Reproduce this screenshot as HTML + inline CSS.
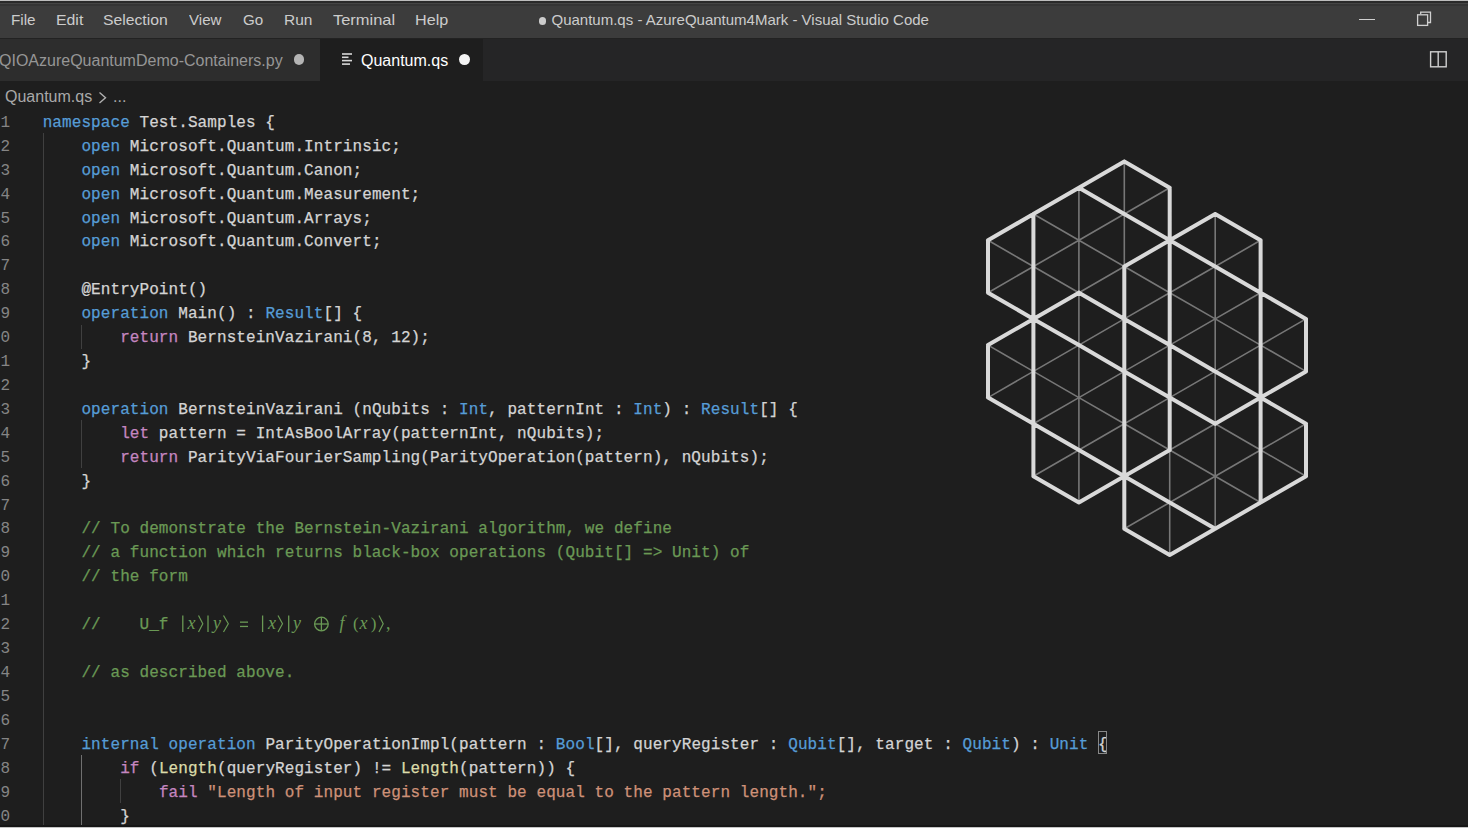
<!DOCTYPE html>
<html><head><meta charset="utf-8">
<style>
*{margin:0;padding:0;box-sizing:border-box}
html,body{width:1468px;height:828px;overflow:hidden;background:#1e1e1e}
body{position:relative;font-family:"Liberation Sans",sans-serif}
.abs{position:absolute;white-space:pre}
#title{position:absolute;left:0;top:0;width:1468px;height:38px;background:#3c3c3c}
.menu{position:absolute;top:10.8px;font-size:15px;color:#cccccc;line-height:17px;white-space:pre;transform-origin:0 0}
#tabs{position:absolute;left:0;top:38px;width:1468px;height:43px;background:#252526}
#tab1{position:absolute;left:0;top:0;width:320px;height:43px;background:#2d2d2d}
#tab2{position:absolute;left:320px;top:0;width:163px;height:43px;background:#1e1e1e}
.cl{position:absolute;left:42.7px;font-family:"Liberation Mono",monospace;font-size:16px;letter-spacing:0.08px;line-height:24px;color:#d4d4d4;white-space:pre;-webkit-text-stroke:0.25px currentColor}
.ln{position:absolute;left:-20px;width:30px;font-family:"Liberation Mono",monospace;font-size:16px;line-height:24px;color:#858585;text-align:right}
.k{color:#569cd6} .c{color:#c586c0} .cm{color:#6a9955} .s{color:#ce9178} .f{color:#dcdcaa}
.g{position:absolute;width:1px}
.t16{position:absolute;white-space:pre;font-size:16px;line-height:18px}
</style></head><body>
<div id="title">
 <div style="position:absolute;left:0;top:0;width:1468px;height:1px;background:#bdbdbd"></div>
 <div style="position:absolute;left:0;top:1px;width:1468px;height:2px;background:#2a2a2a"></div>
 <div style="position:absolute;left:0;top:3px;width:1468px;height:1px;background:#454545"></div>
 <div style="position:absolute;left:0;top:4px;width:1468px;height:2px;background:#353535"></div>
 <div class="menu" style="left:10.79px;transform:scaleX(1.0174)">File</div><div class="menu" style="left:55.76px;transform:scaleX(1.0560)">Edit</div><div class="menu" style="left:103.38px;transform:scaleX(1.0492)">Selection</div><div class="menu" style="left:189.40px;transform:scaleX(1.0061)">View</div><div class="menu" style="left:243.40px;transform:scaleX(1.0100)">Go</div><div class="menu" style="left:283.76px;transform:scaleX(1.0308)">Run</div><div class="menu" style="left:332.98px;transform:scaleX(1.0964)">Terminal</div><div class="menu" style="left:415.36px;transform:scaleX(1.0767)">Help</div>
 <div class="menu" style="left:551.5px">Quantum.qs - AzureQuantum4Mark - Visual Studio Code</div>
 <div style="position:absolute;left:538.8px;top:17.3px;width:7.4px;height:7.4px;border-radius:50%;background:#cccccc"></div>
 <div style="position:absolute;left:1358.5px;top:18.5px;width:16px;height:1.6px;background:#d0d0d0"></div>
 <svg style="position:absolute;left:0;top:0" width="1468" height="37">
  <path d="M1420.7 14.2V12.2H1430.5V22.5H1427.9" fill="none" stroke="#d0d0d0" stroke-width="1.3"/>
  <rect x="1417.6" y="14.8" width="10" height="10.6" fill="none" stroke="#d0d0d0" stroke-width="1.3"/>
 </svg>
</div>
<div id="tabs">
 <div style="position:absolute;left:0;top:0;width:1468px;height:1px;background:#222222;z-index:2"></div>
 <div id="tab1"><div class="t16" style="left:-1px;top:14.2px;color:#969696">QIOAzureQuantumDemo-Containers.py</div>
  <div style="position:absolute;left:293.5px;top:16.4px;width:10.4px;height:10.4px;border-radius:50%;background:#b4b4b4"></div></div>
 <div id="tab2"><div class="t16" style="left:41px;top:14.2px;color:#ffffff">Quantum.qs</div>
  <div style="position:absolute;left:138.9px;top:16.4px;width:10.8px;height:10.8px;border-radius:50%;background:#f4f4f4"></div>
  <svg style="position:absolute;left:0;top:-1px" width="60" height="44">
   <rect x="22" y="16.2" width="10" height="1.6" fill="#d8d8d8"/>
   <rect x="22" y="19.5" width="6.5" height="1.6" fill="#d8d8d8"/>
   <rect x="22" y="22.8" width="10" height="1.6" fill="#d8d8d8"/>
   <rect x="22" y="26.3" width="8" height="1.6" fill="#d8d8d8"/>
  </svg>
 </div>
 <svg style="position:absolute;left:1420px;top:-1px" width="48" height="44">
  <rect x="10.6" y="14.8" width="15.6" height="15" fill="none" stroke="#d0d0d0" stroke-width="1.4"/>
  <line x1="18.2" y1="14.8" x2="18.2" y2="29.8" stroke="#d0d0d0" stroke-width="1.4"/>
 </svg>
</div>
<div class="t16" style="left:5px;top:88px;color:#a9a9a9">Quantum.qs</div><svg style="position:absolute;left:98px;top:90px" width="12" height="16"><polyline points="1.5,2.5 7.5,7.8 1.5,13" fill="none" stroke="#b0b0b0" stroke-width="1.4"/></svg><div class="t16" style="left:113px;top:88px;color:#a9a9a9">...</div>
<div class="g" style="left:43px;top:133px;height:694px;background:#404040"></div><div class="g" style="left:81px;top:325px;height:24px;background:#404040"></div><div class="g" style="left:81px;top:420px;height:48px;background:#404040"></div><div class="g" style="left:81px;top:755px;height:72px;background:#707070"></div><div class="g" style="left:120px;top:779px;height:24px;background:#404040"></div>
<div class="ln" style="top:110.85px">1</div><div class="cl" style="top:110.85px"><span class="k">namespace</span> Test.Samples {</div><div class="ln" style="top:134.77px">2</div><div class="cl" style="top:134.77px">    <span class="k">open</span> Microsoft.Quantum.Intrinsic;</div><div class="ln" style="top:158.69px">3</div><div class="cl" style="top:158.69px">    <span class="k">open</span> Microsoft.Quantum.Canon;</div><div class="ln" style="top:182.61px">4</div><div class="cl" style="top:182.61px">    <span class="k">open</span> Microsoft.Quantum.Measurement;</div><div class="ln" style="top:206.53px">5</div><div class="cl" style="top:206.53px">    <span class="k">open</span> Microsoft.Quantum.Arrays;</div><div class="ln" style="top:230.45px">6</div><div class="cl" style="top:230.45px">    <span class="k">open</span> Microsoft.Quantum.Convert;</div><div class="ln" style="top:254.37px">7</div><div class="ln" style="top:278.29px">8</div><div class="cl" style="top:278.29px">    @EntryPoint()</div><div class="ln" style="top:302.21px">9</div><div class="cl" style="top:302.21px">    <span class="k">operation</span> Main() : <span class="k">Result</span>[] {</div><div class="ln" style="top:326.13px">0</div><div class="cl" style="top:326.13px">        <span class="c">return</span> BernsteinVazirani(8, 12);</div><div class="ln" style="top:350.05px">1</div><div class="cl" style="top:350.05px">    }</div><div class="ln" style="top:373.97px">2</div><div class="ln" style="top:397.89px">3</div><div class="cl" style="top:397.89px">    <span class="k">operation</span> BernsteinVazirani (nQubits : <span class="k">Int</span>, patternInt : <span class="k">Int</span>) : <span class="k">Result</span>[] {</div><div class="ln" style="top:421.81px">4</div><div class="cl" style="top:421.81px">        <span class="c">let</span> pattern = IntAsBoolArray(patternInt, nQubits);</div><div class="ln" style="top:445.73px">5</div><div class="cl" style="top:445.73px">        <span class="c">return</span> ParityViaFourierSampling(ParityOperation(pattern), nQubits);</div><div class="ln" style="top:469.65px">6</div><div class="cl" style="top:469.65px">    }</div><div class="ln" style="top:493.57px">7</div><div class="ln" style="top:517.49px">8</div><div class="cl" style="top:517.49px">    <span class="cm">// To demonstrate the Bernstein-Vazirani algorithm, we define</span></div><div class="ln" style="top:541.41px">9</div><div class="cl" style="top:541.41px">    <span class="cm">// a function which returns black-box operations (Qubit[] =&gt; Unit) of</span></div><div class="ln" style="top:565.33px">0</div><div class="cl" style="top:565.33px">    <span class="cm">// the form</span></div><div class="ln" style="top:589.25px">1</div><div class="ln" style="top:613.17px">2</div><div class="cl" style="top:613.17px">    <span class="cm">//    U_f</span></div><div class="ln" style="top:637.09px">3</div><div class="ln" style="top:661.01px">4</div><div class="cl" style="top:661.01px">    <span class="cm">// as described above.</span></div><div class="ln" style="top:684.93px">5</div><div class="ln" style="top:708.85px">6</div><div class="ln" style="top:732.77px">7</div><div class="cl" style="top:732.77px">    <span class="k">internal</span> <span class="k">operation</span> ParityOperationImpl(pattern : <span class="k">Bool</span>[], queryRegister : <span class="k">Qubit</span>[], target : <span class="k">Qubit</span>) : <span class="k">Unit</span> {</div><div class="ln" style="top:756.69px">8</div><div class="cl" style="top:756.69px">        <span class="c">if</span> (<span class="f">Length</span>(queryRegister) != <span class="f">Length</span>(pattern)) {</div><div class="ln" style="top:780.61px">9</div><div class="cl" style="top:780.61px">            <span class="c">fail</span> <span class="s">&quot;Length of input register must be equal to the pattern length.&quot;;</span></div><div class="ln" style="top:804.53px">0</div><div class="cl" style="top:804.53px">        }</div>
<div style="position:absolute;left:1097.8px;top:731px;width:9.4px;height:23.4px;border:1px solid #888888"></div>
<svg width="1468" height="828" style="position:absolute;left:0;top:0">
<line x1="182.8" y1="615.5" x2="182.8" y2="632" stroke="#6a9955" stroke-width="1.3"/><text x="187.6" y="628.5" font-family="Liberation Serif" font-style="italic" font-size="18" fill="#6a9955">x</text><polyline points="198.5,615.5 202.8,623.75 198.5,632" fill="none" stroke="#6a9955" stroke-width="1.2"/><line x1="208" y1="615.5" x2="208" y2="632" stroke="#6a9955" stroke-width="1.3"/><text x="213" y="628.5" font-family="Liberation Serif" font-style="italic" font-size="18" fill="#6a9955">y</text><polyline points="223.5,615.5 228.3,623.75 223.5,632" fill="none" stroke="#6a9955" stroke-width="1.2"/><rect x="240" y="621.5" width="8" height="1.3" fill="#6a9955"/><rect x="240" y="625.8" width="8" height="1.3" fill="#6a9955"/><line x1="262.6" y1="615.5" x2="262.6" y2="632" stroke="#6a9955" stroke-width="1.3"/><text x="268" y="628.5" font-family="Liberation Serif" font-style="italic" font-size="18" fill="#6a9955">x</text><polyline points="278,615.5 282.5,623.75 278,632" fill="none" stroke="#6a9955" stroke-width="1.2"/><line x1="288.7" y1="615.5" x2="288.7" y2="632" stroke="#6a9955" stroke-width="1.3"/><text x="293" y="628.5" font-family="Liberation Serif" font-style="italic" font-size="18" fill="#6a9955">y</text><circle cx="321.4" cy="624" r="6.8" fill="none" stroke="#6a9955" stroke-width="1.3"/><line x1="314.6" y1="624" x2="328.2" y2="624" stroke="#6a9955" stroke-width="1.3"/><line x1="321.4" y1="617.2" x2="321.4" y2="630.8" stroke="#6a9955" stroke-width="1.3"/><text x="339.5" y="628.5" font-family="Liberation Serif" font-style="italic" font-size="18" fill="#6a9955">f</text><text x="353" y="629" font-family="Liberation Serif" font-size="17" fill="#6a9955">(</text><text x="359.5" y="628.5" font-family="Liberation Serif" font-style="italic" font-size="18" fill="#6a9955">x</text><text x="370.8" y="629" font-family="Liberation Serif" font-size="17" fill="#6a9955">)</text><polyline points="379,615.5 383.2,623.75 379,632" fill="none" stroke="#6a9955" stroke-width="1.2"/><text x="386" y="629" font-family="Liberation Serif" font-size="18" fill="#6a9955">,</text>
<path d="M988.0 240.3L1033.4 266.5M988.0 292.7L1033.4 266.5M988.0 345.1L1033.4 371.4M988.0 397.6L1033.4 371.4M1033.4 214.0L1078.9 240.3M1033.4 266.5L1078.9 240.3M1033.4 266.5L1078.9 292.7M1033.4 371.4L1078.9 345.1M1033.4 371.4L1078.9 397.6M1033.4 423.8L1078.9 397.6M1033.4 476.2L1078.9 450.0M1078.9 187.8L1078.9 240.3M1078.9 240.3L1078.9 292.7M1078.9 240.3L1124.3 214.0M1078.9 240.3L1124.3 266.5M1078.9 292.7L1078.9 345.1M1078.9 292.7L1124.3 266.5M1078.9 345.1L1078.9 397.6M1078.9 345.1L1124.3 318.9M1078.9 397.6L1078.9 450.0M1078.9 397.6L1124.3 371.4M1078.9 397.6L1124.3 423.8M1078.9 450.0L1078.9 502.5M1078.9 450.0L1124.3 423.8M1124.3 161.6L1124.3 214.0M1124.3 214.0L1124.3 266.5M1124.3 214.0L1169.7 187.8M1124.3 266.5L1169.7 292.7M1124.3 318.9L1169.7 292.7M1124.3 371.4L1169.7 345.1M1124.3 423.8L1169.7 397.6M1124.3 423.8L1169.7 450.0M1124.3 528.7L1169.7 502.5M1169.7 292.7L1215.2 266.5M1169.7 292.7L1215.2 318.9M1169.7 345.1L1215.2 318.9M1169.7 397.6L1215.2 371.4M1169.7 450.0L1169.7 502.5M1169.7 450.0L1215.2 423.8M1169.7 450.0L1215.2 476.2M1169.7 502.5L1169.7 554.9M1169.7 502.5L1215.2 476.2M1215.2 214.0L1215.2 266.5M1215.2 266.5L1215.2 318.9M1215.2 266.5L1260.6 240.3M1215.2 318.9L1215.2 371.4M1215.2 318.9L1260.6 292.7M1215.2 318.9L1260.6 345.1M1215.2 371.4L1215.2 423.8M1215.2 371.4L1260.6 345.1M1215.2 423.8L1215.2 476.2M1215.2 423.8L1260.6 450.0M1215.2 476.2L1215.2 528.7M1215.2 476.2L1260.6 450.0M1215.2 476.2L1260.6 502.5M1260.6 345.1L1306.0 318.9M1260.6 345.1L1306.0 371.4M1260.6 450.0L1306.0 423.8M1260.6 450.0L1306.0 476.2" stroke="#777" stroke-width="1.6" fill="none"/>
<path d="M988.0 240.3L988.0 292.7M988.0 240.3L1033.4 214.0M988.0 292.7L1033.4 318.9M988.0 345.1L988.0 397.6M988.0 345.1L1033.4 318.9M988.0 397.6L1033.4 423.8M1033.4 214.0L1033.4 266.5M1033.4 214.0L1078.9 187.8M1033.4 266.5L1033.4 318.9M1033.4 318.9L1033.4 371.4M1033.4 318.9L1078.9 292.7M1033.4 318.9L1078.9 345.1M1033.4 371.4L1033.4 423.8M1033.4 423.8L1033.4 476.2M1033.4 423.8L1078.9 450.0M1033.4 476.2L1078.9 502.5M1078.9 187.8L1124.3 161.6M1078.9 187.8L1124.3 214.0M1078.9 292.7L1124.3 318.9M1078.9 345.1L1124.3 371.4M1078.9 450.0L1124.3 476.2M1078.9 502.5L1124.3 476.2M1124.3 161.6L1169.7 187.8M1124.3 214.0L1169.7 240.3M1124.3 266.5L1124.3 318.9M1124.3 266.5L1169.7 240.3M1124.3 318.9L1124.3 371.4M1124.3 318.9L1169.7 345.1M1124.3 371.4L1124.3 423.8M1124.3 371.4L1169.7 397.6M1124.3 423.8L1124.3 476.2M1124.3 476.2L1124.3 528.7M1124.3 476.2L1169.7 450.0M1124.3 476.2L1169.7 502.5M1124.3 528.7L1169.7 554.9M1169.7 187.8L1169.7 240.3M1169.7 240.3L1169.7 292.7M1169.7 240.3L1215.2 214.0M1169.7 240.3L1215.2 266.5M1169.7 292.7L1169.7 345.1M1169.7 345.1L1169.7 397.6M1169.7 345.1L1215.2 371.4M1169.7 397.6L1169.7 450.0M1169.7 397.6L1215.2 423.8M1169.7 502.5L1215.2 528.7M1169.7 554.9L1215.2 528.7M1215.2 214.0L1260.6 240.3M1215.2 266.5L1260.6 292.7M1215.2 371.4L1260.6 397.6M1215.2 423.8L1260.6 397.6M1215.2 528.7L1260.6 502.5M1260.6 240.3L1260.6 292.7M1260.6 292.7L1260.6 345.1M1260.6 292.7L1306.0 318.9M1260.6 345.1L1260.6 397.6M1260.6 397.6L1260.6 450.0M1260.6 397.6L1306.0 371.4M1260.6 397.6L1306.0 423.8M1260.6 450.0L1260.6 502.5M1260.6 502.5L1306.0 476.2M1306.0 318.9L1306.0 371.4M1306.0 423.8L1306.0 476.2" stroke="#d9d9d9" stroke-width="4" fill="none" stroke-linecap="round"/>
</svg>
<div style="position:absolute;left:0;top:825px;width:1468px;height:1.5px;background:#161616"></div><div style="position:absolute;left:0;top:826.5px;width:1468px;height:1.5px;background:#c4c4c4"></div>

</body></html>
